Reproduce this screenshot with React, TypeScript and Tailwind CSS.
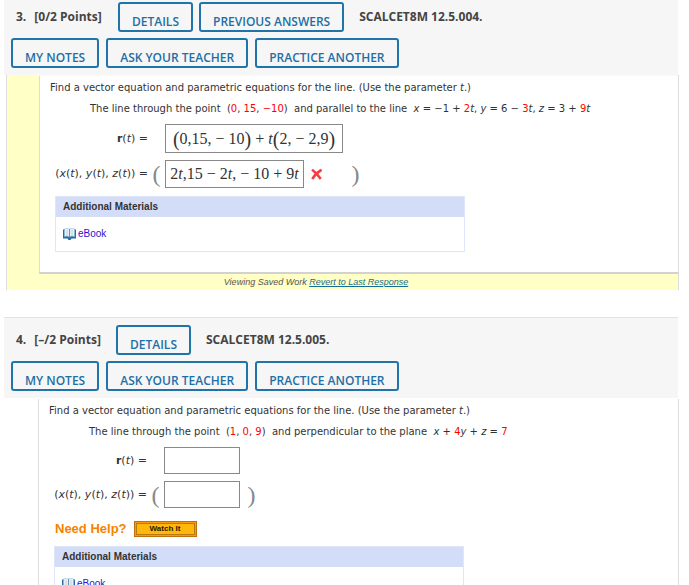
import type { ReactNode } from "react";

function HeaderButton({ children }: { children: ReactNode }) {
    return (
        <button type="button" className="h-[30px] shrink-0 rounded-[3px] border-2 border-[#2074aa] px-3 pt-[10px] text-[12px] leading-4 font-semibold whitespace-nowrap text-[#1d6fa5]">
            {children}
        </button>
    );
}

function Red({ children }: { children: ReactNode }) {
    return <span className="text-[#f00]">{children}</span>;
}

function Paren({ children }: { children: ReactNode }) {
    return <span className="w-[17px] shrink-0 text-center font-['Liberation_Serif',serif] text-[24px] leading-6 text-[#888]">{children}</span>;
}

// taller brackets round a vector
function Vector({ children }: { children: ReactNode }) {
    return (
        <>
            <span className="text-[20px]">(</span>
            {children}
            <span className="text-[20px]">)</span>
        </>
    );
}

function BookIcon() {
    return (
        <svg viewBox="0 0 13 12" className="h-3 w-[13px]" aria-hidden="true">
            <path d="M0 2L1 1h11l1 1v8.500H8.500L7.500 12h-2l-1-1.500H0z" fill="#286b9f" />
            <path d="M1.500 1q3-1.500 5 0Q9-.5 11.500 1v7.500q-3-1-5 .5Q4 7.500 1.500 8.500z" fill="#e9f0f5" stroke="#8fc0de" strokeWidth=".6" />
            <path d="M6.500 1v8" stroke="#477b9f" strokeWidth=".8" />
            <path d="M3 3h2M3 5h2M3 7h2M8 3h2M8 5h2M8 7h2" stroke="#b2bec6" strokeWidth=".6" />
        </svg>
    );
}

function Materials() {
    return (
        <section className="w-[410px] max-w-full border border-[#dfe6fa] font-['Liberation_Sans',sans-serif]">
            <h3 className="bg-[#d3ddf8] px-[7px] text-[10px] leading-5 font-bold text-[#333]">Additional Materials</h3>
            <a href="#ebook" className="flex h-[34px] items-center gap-[2px] px-[7px] text-[10px] text-[#3010d0]">
                <BookIcon />
                eBook
            </a>
        </section>
    );
}

const label = "w-[93px] shrink-0 text-right text-[11px] whitespace-pre";
const answer = "flex shrink-0 items-center justify-center border border-[#888] font-['Liberation_Serif',serif] text-[16px] whitespace-pre text-[#333]";
const emptyBox = "h-[27px] w-[76px] shrink-0 border border-[#888] bg-white px-1 font-['Liberation_Serif',serif] text-[16px]";

function App() {
    return (
        <main className="h-screen overflow-hidden bg-white pr-[10px] pl-1 font-['DejaVu_Sans',sans-serif] text-[10px] leading-5 text-[#333]">
            {/* question 3 */}
            <header className="mr-px bg-[#f6f6f6] pt-[2px] pb-[7px] pl-[7px] font-['Open_Sans',sans-serif] text-[12px] font-bold text-[#444]">
                <div className="flex items-center">
                    <h2 className="w-[107px] shrink-0 pl-[5px] whitespace-pre"><span className="mr-2">3.</span>[0/2 Points]</h2>
                    <div className="flex gap-[6px]">
                        <HeaderButton>DETAILS</HeaderButton>
                        <HeaderButton>PREVIOUS ANSWERS</HeaderButton>
                    </div>
                    <span className="ml-[15px]">SCALCET8M 12.5.004.</span>
                </div>
                <div className="mt-[6px] flex gap-[7px]">
                    <HeaderButton>MY NOTES</HeaderButton>
                    <HeaderButton>ASK YOUR TEACHER</HeaderButton>
                    <HeaderButton>PRACTICE ANOTHER</HeaderButton>
                </div>
            </header>
            <section className="ml-[2px] border-x border-[#ddd] bg-[#ffffc6] pt-px">
                <div className="ml-8 border-b-2 border-l border-b-[#d2d2d2] border-l-[#ddd] bg-white pt-[2px] pb-5">
                    <p className="pl-[10px]">Find a vector equation and parametric equations for the line. (Use the parameter <i>t</i>.)</p>
                    <p className="mt-px pl-[50px] whitespace-pre">The line through the point  (<Red>0</Red>, <Red>15</Red>, <Red>−10</Red>)  and parallel to the line  <i>x</i> = −1 + <Red>2</Red><i>t</i>, <i>y</i> = 6 − <Red>3</Red><i>t</i>, <i>z</i> = 3 + <Red>9</Red><i>t</i></p>
                    <div className="mt-[5px] ml-[15px] flex items-center">
                        <span className={label}><b>r</b>(<i>t</i>) =</span>
                        <output className={answer + " ml-[17px] h-[29px] w-[178px]"} aria-label="r(t)"><Vector>0,15, − 10</Vector> + <i>t</i><Vector>2, − 2,9</Vector></output>
                    </div>
                    <div className="mt-[7px] ml-[15px] flex items-center">
                        <span className={label}>(<i>x</i>(<i>t</i>), <i>y</i>(<i>t</i>), <i>z</i>(<i>t</i>)) =</span>
                        <Paren>(</Paren>
                        <output className={answer + " h-7 w-[139px]"} aria-label="(x(t), y(t), z(t))">2<i>t</i>,15 − 2<i>t</i>, − 10 + 9<i>t</i></output>
                        <svg viewBox="0 0 12 12" className="mr-[25px] ml-[6px] h-3 w-3" role="img" aria-label="Incorrect">
                            <path d="M3 2.500Q6.500 5 10 10M10.500 2.500Q6 5 3 10" fill="none" stroke="#f73e43" strokeWidth="2.600" strokeLinecap="square" />
                        </svg>
                        <Paren>)</Paren>
                    </div>
                    <div className="mt-2 ml-[15px]"><Materials /></div>
                </div>
                <p className="pr-[53px] text-center font-['Liberation_Sans',sans-serif] text-[9px] leading-4 text-[#555] italic">
                    Viewing Saved Work <a href="#revert" className="text-[#136d95] underline">Revert to Last Response</a>
                </p>
            </section>

            {/* question 4 */}
            <header className="mt-[27px] mr-px border-t border-[#e3e3e3] bg-[#f6f6f6] pt-[7px] pb-[7px] pl-[7px] font-['Open_Sans',sans-serif] text-[12px] font-bold text-[#444]">
                <div className="flex items-center">
                    <h2 className="w-[105px] shrink-0 pl-[5px] whitespace-pre"><span className="mr-2">4.</span>[–/2 Points]</h2>
                    <HeaderButton>DETAILS</HeaderButton>
                    <span className="ml-[15px]">SCALCET8M 12.5.005.</span>
                </div>
                <div className="mt-[6px] flex gap-[7px]">
                    <HeaderButton>MY NOTES</HeaderButton>
                    <HeaderButton>ASK YOUR TEACHER</HeaderButton>
                    <HeaderButton>PRACTICE ANOTHER</HeaderButton>
                </div>
            </header>
            <section className="mt-px ml-[34px] border-x border-[#ddd] pt-[2px] pb-5">
                <p className="pl-[10px]">Find a vector equation and parametric equations for the line. (Use the parameter <i>t</i>.)</p>
                <p className="mt-px pl-[50px] whitespace-pre">The line through the point  (<Red>1</Red>, <Red>0</Red>, <Red>9</Red>)  and perpendicular to the plane  <i>x</i> + <Red>4</Red><i>y</i> + <i>z</i> = <Red>7</Red></p>
                <div className="mt-[5px] ml-[15px] flex items-center">
                    <label htmlFor="vector" className={label}><b>r</b>(<i>t</i>) =</label>
                    <input id="vector" type="text" className={emptyBox + " ml-[17px]"} />
                </div>
                <div className="mt-[7px] ml-[15px] flex items-center">
                    <label htmlFor="parametric" className={label}>(<i>x</i>(<i>t</i>), <i>y</i>(<i>t</i>), <i>z</i>(<i>t</i>)) =</label>
                    <Paren>(</Paren>
                    <input id="parametric" type="text" className={emptyBox + " mr-[3px]"} />
                    <Paren>)</Paren>
                </div>
                <div className="mt-3 mb-2 ml-4 flex items-center gap-[7px] font-['Liberation_Sans',sans-serif]">
                    <span className="text-[13px] leading-[18px] font-bold text-[#f78200]">Need Help?</span>
                    <button type="button" className="h-4 w-[63px] border border-[#c56d08] bg-[#f79a0c] p-px">
                        <span className="block border border-[#b87a10] bg-[#ffb70b] text-[8px] leading-[10px] font-bold text-[#2b1900]">Watch It</span>
                    </button>
                </div>
                <div className="ml-[15px]"><Materials /></div>
            </section>
        </main>
    );
}

export default App;
